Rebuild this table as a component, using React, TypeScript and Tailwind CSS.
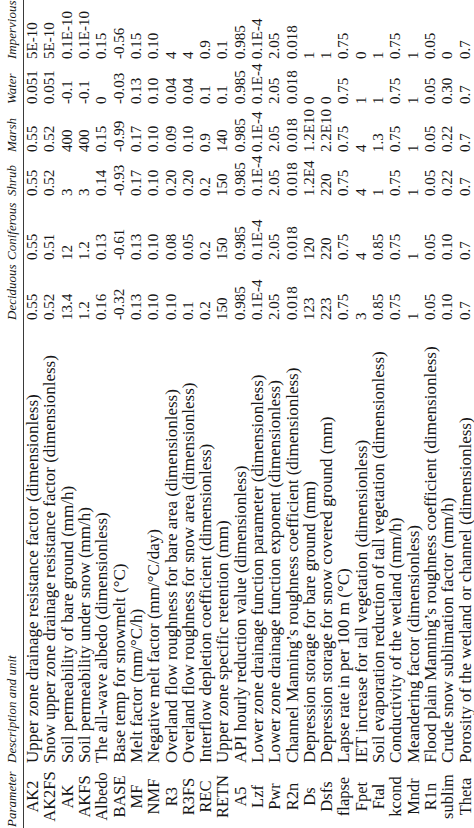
import React from "react";

type Row = [string, string, string[]];

const rows: Row[] = [
  ["AK2", "Upper zone drainage resistance factor (dimensionless)", ["0.55", "0.55", "0.55", "0.55", "0.051", "5E-10"]],
  ["AK2FS", "Snow upper zone drainage resistance factor (dimensionless)", ["0.52", "0.51", "0.52", "0.52", "0.051", "5E-10"]],
  ["AK", "Soil permeability of bare ground (mm/h)", ["13.4", "12", "3", "400", "-0.1", "0.1E-10"]],
  ["AKFS", "Soil permeability under snow (mm/h)", ["1.2", "1.2", "3", "400", "-0.1", "0.1E-10"]],
  ["Albedo", "The all-wave albedo (dimensionless)", ["0.16", "0.13", "0.14", "0.15", "0", "0.15"]],
  ["BASE", "Base temp for snowmelt (°C)", ["-0.32", "-0.61", "-0.93", "-0.99", "-0.03", "-0.56"]],
  ["MF", "Melt factor (mm/°C/h)", ["0.13", "0.13", "0.17", "0.17", "0.13", "0.15"]],
  ["NMF", "Negative melt factor (mm/°C/day)", ["0.10", "0.10", "0.10", "0.10", "0.10", "0.10"]],
  ["R3", "Overland flow roughness for bare area (dimensionless)", ["0.10", "0.08", "0.20", "0.09", "0.04", "4"]],
  ["R3FS", "Overland flow roughness for snow area (dimensionless)", ["0.1", "0.05", "0.20", "0.10", "0.04", "4"]],
  ["REC", "Interflow depletion coefficient (dimensionless)", ["0.2", "0.2", "0.2", "0.9", "0.1", "0.9"]],
  ["RETN", "Upper zone specific retention (mm)", ["150", "150", "150", "140", "0.1", "0.1"]],
  ["A5", "API hourly reduction value (dimensionless)", ["0.985", "0.985", "0.985", "0.985", "0.985", "0.985"]],
  ["Lzf", "Lower zone drainage function parameter (dimensionless)", ["0.1E-4", "0.1E-4", "0.1E-4", "0.1E-4", "0.1E-4", "0.1E-4"]],
  ["Pwr", "Lower zone drainage function exponent (dimensionless)", ["2.05", "2.05", "2.05", "2.05", "2.05", "2.05"]],
  ["R2n", "Channel Manning’s roughness coefficient (dimensionless)", ["0.018", "0.018", "0.018", "0.018", "0.018", "0.018"]],
  ["Ds", "Depression storage for bare ground (mm)", ["123", "120", "1.2E4", "1.2E10", "0", "1"]],
  ["Dsfs", "Depression storage for snow covered ground (mm)", ["223", "220", "220", "2.2E10", "0", "1"]],
  ["flapse", "Lapse rate in per 100 m (°C)", ["0.75", "0.75", "0.75", "0.75", "0.75", "0.75"]],
  ["Fpet", "IET increase for tall vegetation (dimensionless)", ["3", "4", "4", "4", "1", "0"]],
  ["Ftal", "Soil evaporation reduction of tall vegetation (dimensionless)", ["0.85", "0.85", "1", "1.3", "1", "1"]],
  ["kcond", "Conductivity of the wetland (mm/h)", ["0.75", "0.75", "0.75", "0.75", "0.75", "0.75"]],
  ["Mndr", "Meandering factor (dimensionless)", ["1", "1", "1", "1", "1", "1"]],
  ["R1n", "Flood plain Manning’s roughness coefficient (dimensionless)", ["0.05", "0.05", "0.05", "0.05", "0.05", "0.05"]],
  ["sublim", "Crude snow sublimation factor (mm/h)", ["0.10", "0.10", "0.22", "0.22", "0.30", "0"]],
  ["Theta", "Porosity of the wetland or channel (dimensionless)", ["0.7", "0.7", "0.7", "0.7", "0.7", "0.7"]],
];

const headers = ["Deciduous", "Coniferous", "Shrub", "Marsh", "Water", "Impervious"];
const valueWidths = ["w-[60px]", "w-[64px]", "w-[44px]", "w-[48px]", "w-[45px]", "w-[59px]"];

export default function App() {
  return (
    <div className="w-[474px] h-[828px] overflow-hidden bg-white">
      <div
        className="w-[828px] h-[474px] origin-top-left -rotate-90 translate-y-[828px] text-[#161616]"
        style={{ fontFamily: '"Liberation Serif", "Times New Roman", serif' }}
      >
        <div className="flex h-[24px] items-center border-b border-[#3a3a3a] italic text-[13px]">
          <div className="w-[62px] shrink-0 pl-[1px] whitespace-nowrap">Parameter</div>
          <div className="w-[446px] shrink-0 pl-[3px]">Description and unit</div>
          {headers.map((h, i) => (
            <div key={h} className={`${valueWidths[i]} shrink-0 whitespace-nowrap`}>
              {h}
            </div>
          ))}
        </div>
        {rows.map(([p, d, v]) => (
          <div key={p} className="flex h-[17.3px] items-center leading-[17px]">
            <div className="w-[62px] shrink-0 text-center pl-[1px] text-[16.5px]">{p}</div>
            <div className="w-[446px] shrink-0 whitespace-nowrap pl-[3px] text-[17px]">{d}</div>
            {v.map((x, i) => (
              <div key={i} className={`${valueWidths[i]} shrink-0 whitespace-nowrap text-[15px]`}>
                {x}
              </div>
            ))}
          </div>
        ))}
      </div>
    </div>
  );
}
